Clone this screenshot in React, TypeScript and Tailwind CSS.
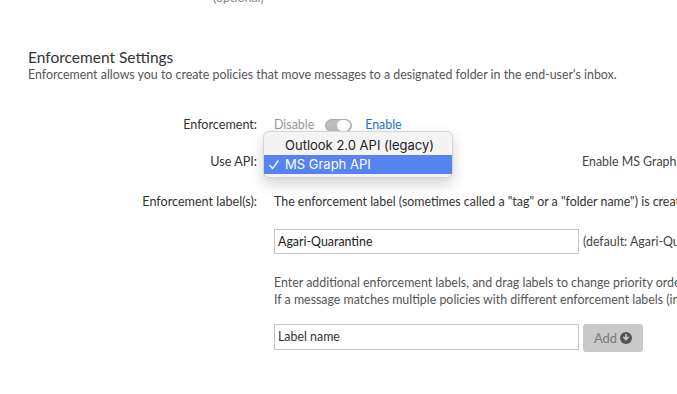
import React from "react";

const font = { fontFamily: '"Source Sans Pro", Lato, "Noto Sans", sans-serif' };

function Row({ label, children, className = "" }: { label: string; children: React.ReactNode; className?: string }) {
  return (
    <div className={`flex items-start ${className}`}>
      <div className="w-[229px] shrink-0 text-right text-[12.6px] text-[#333]">{label}</div>
      <div className="ml-[17px] min-w-0 flex-1">{children}</div>
    </div>
  );
}

export default function App() {
  return (
    <div className="h-[394px] w-[677px] overflow-hidden bg-white text-[#333]" style={font}>
      <div className="h-[6px] overflow-hidden pl-[213px]">
        <div className="-mt-[11px] text-[12.4px] text-[#888]">(optional)</div>
      </div>

      <div className="px-[28px] pt-[42px]">
        <h2 className="text-[15.5px] leading-[19px] text-[#333]">Enforcement Settings</h2>
        <p className="text-[12.4px] leading-[16px] text-[#555]">
          Enforcement allows you to create policies that move messages to a designated folder in the end-user's inbox.
        </p>

        <Row label="Enforcement:" className="mt-[34px] leading-[16px]">
          <div className="flex items-center text-[12.4px]">
            <span className="text-[#999]">Disable</span>
            <span className="ml-[11px] flex h-[13px] w-[27px] items-center justify-end rounded-full border border-[#a9a9a9] bg-[#bdbdbd] p-[1px]">
              <span className="h-[11px] w-[13px] rounded-full bg-white" />
            </span>
            <span className="ml-[13px] text-[#1a73c8]">Enable</span>
          </div>
        </Row>

        <Row label="Use API:" className="mt-[21px] leading-[16px]">
          <div className="relative flex text-[12.4px]">
            <div className="w-[308px] shrink-0" />
            <span className="whitespace-nowrap text-[#444]">Enable MS Graph API</span>
            <div
              className="absolute -left-[11px] -top-[23px] w-[190px] rounded-[6px] border border-[#d4d4d4] bg-[#f4f4f4] pb-[3px] pt-[4px] text-[13px] text-[#222] shadow-[0_6px_14px_rgba(0,0,0,0.18)]"
              style={{ fontFamily: 'Inter, "Liberation Sans", sans-serif' }}
            >
              <div className="h-[19px] pl-[21px] leading-[19px]">Outlook 2.0 API (legacy)</div>
              <div className="relative h-[19px] bg-[#5683f0] pl-[21px] leading-[19px] text-white">
                <svg className="absolute left-[5px] top-[5px]" width="10" height="10" viewBox="0 0 10 10">
                  <path d="M1 5.6L3.6 8.6L9 1" stroke="white" strokeWidth="1.4" fill="none" strokeLinecap="round" strokeLinejoin="round" />
                </svg>
                MS Graph API
              </div>
            </div>
          </div>
        </Row>

        <Row label="Enforcement label(s):" className="mt-[24px] leading-[16px]">
          <div className="whitespace-nowrap text-[12.4px] text-[#333]">
            The enforcement label (sometimes called a "tag" or a "folder name") is created in the end-user's mailbox.
          </div>
          <div className="mt-[19px] flex items-center">
            <div className="flex h-[25px] w-[305px] shrink-0 items-center border border-[#c6c6c6] bg-white pl-[3px] text-[12.4px] text-[#222]">
              Agari-Quarantine
            </div>
            <span className="ml-[4px] whitespace-nowrap text-[12.4px] text-[#444]">(default: Agari-Quarantine)</span>
          </div>
          <div className="mt-[20px] whitespace-nowrap text-[12.4px] leading-[17px] text-[#555]">
            <div>Enter additional enforcement labels, and drag labels to change priority order.</div>
            <div>If a message matches multiple policies with different enforcement labels (in order of priority).</div>
          </div>
          <div className="mt-[16px] flex items-start">
            <div className="flex h-[26px] w-[305px] shrink-0 items-center border border-[#c6c6c6] bg-white pl-[3px] text-[12.4px] text-[#333]">
              Label name
            </div>
            <button className="ml-[4px] flex h-[28px] w-[60px] items-center justify-center gap-[3px] rounded-[3px] bg-[#c9c9c9] text-[13px] text-[#777]">
              Add
              <svg width="12" height="12" viewBox="0 0 16 16">
                <circle cx="8" cy="8" r="8" fill="#555" />
                <path d="M8 3.5v6M5 7l3 3.2L11 7" stroke="#c9c9c9" strokeWidth="2.2" fill="none" strokeLinecap="round" strokeLinejoin="round" />
              </svg>
            </button>
          </div>
        </Row>
      </div>
    </div>
  );
}
